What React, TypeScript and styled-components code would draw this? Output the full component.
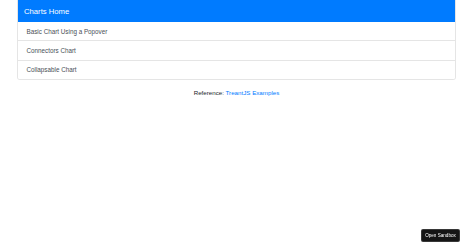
import * as React from 'react';
import styled, { createGlobalStyle } from 'styled-components';

const GlobalStyle = createGlobalStyle`
    html, body {
        margin: 0;
        padding: 0;
        background: #ffffff;
        font-family: "Liberation Sans", Arial, Helvetica, sans-serif;
        color: #212529;
    }
`;

const PageStyled = styled.div`
    padding: 0 18px 0 17px;
`;

const CardStyled = styled.div`
    border: 1px solid rgba(0, 0, 0, 0.1);
    border-top: none;
    border-radius: 0 0 3px 3px;
    overflow: hidden;
`;

const HeaderStyled = styled.div`
    background: #007bff;
    color: #ffffff;
    font-size: 7.7px;
    line-height: 9px;
    padding: 6.5px 7px;
    margin: 0 -1px;
`;

const ItemStyled = styled.div`
    font-size: 6.3px;
    line-height: 9px;
    padding: 4.7px 8.5px;
    color: #495057;
    background: #ffffff;

    & + & {
        border-top: 1px solid rgba(0, 0, 0, 0.1);
    }
`;

const ReferenceStyled = styled.p`
    margin: 8px 0 0;
    text-align: center;
    font-size: 6.2px;
    line-height: 9px;
    color: #212529;
`;

const LinkStyled = styled.a`
    color: #007bff;
    text-decoration: none;
`;

const SandboxButton = styled.a`
    position: fixed;
    right: 14px;
    bottom: 6px;
    width: 39px;
    height: 13px;
    box-sizing: border-box;
    display: flex;
    align-items: center;
    justify-content: center;
    background: #151515;
    border: 1px solid rgba(255, 255, 255, 0.15);
    border-radius: 2px;
    color: #ffffff;
    font-size: 4.6px;
    text-decoration: none;
`;

const charts = ['Basic Chart Using a Popover', 'Connectors Chart', 'Collapsable Chart'];

export default function App() {
    return (
        <>
            <GlobalStyle />
            <PageStyled>
                <CardStyled>
                    <HeaderStyled>Charts Home</HeaderStyled>
                    {charts.map(name => (
                        <ItemStyled key={name}>{name}</ItemStyled>
                    ))}
                </CardStyled>
                <ReferenceStyled>
                    Reference: <LinkStyled href="#">TreantJS Examples</LinkStyled>
                </ReferenceStyled>
            </PageStyled>
            <SandboxButton href="#">Open Sandbox</SandboxButton>
        </>
    );
}
